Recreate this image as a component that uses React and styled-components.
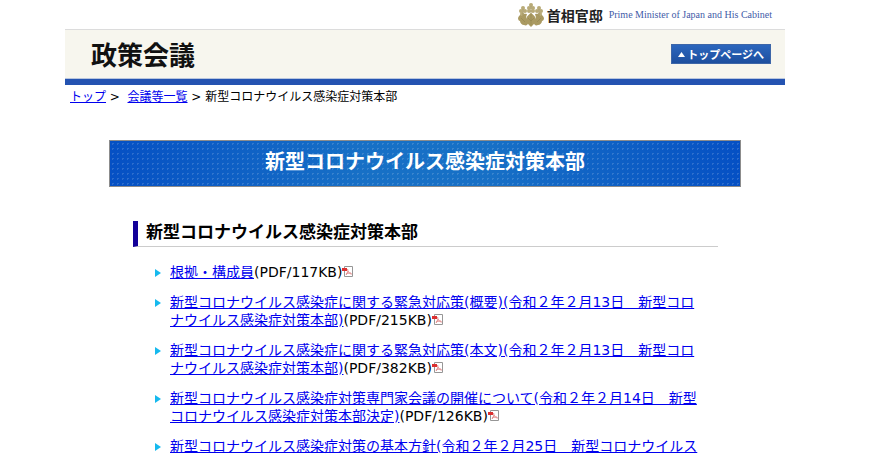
import React from 'react';
import styled, { createGlobalStyle } from 'styled-components';

const GlobalStyle = createGlobalStyle`
  body {
    margin: 0;
    background: #fff;
    color: #000;
    font-family: 'DejaVu Sans', 'Noto Sans CJK JP', sans-serif;
  }

  a {
    color: #0000ee;
  }
`;

const StyledPage = styled.div`
  padding-right: 21px;
`;

const StyledWrapper = styled.div`
  max-width: 720px;
  margin: 0 auto;
`;

const StyledTopBar = styled.div`
  display: flex;
  align-items: center;
  justify-content: flex-end;
  height: 29px;
  padding-right: 13px;
  border-bottom: 1px solid #dcdcdc;
`;

const StyledCrest = styled.svg`
  width: 26px;
  height: 24px;
  margin-right: 3px;
`;

const StyledOffice = styled.span`
  margin-right: 6px;
  color: #222;
  font-family: 'Noto Sans CJK JP', sans-serif;
  font-size: 14px;
  font-weight: 700;
  line-height: 20px;
`;

const StyledOfficeEnglish = styled.span`
  color: #3f5ca8;
  font-family: 'Liberation Serif', serif;
  font-size: 10px;
  line-height: 20px;
`;

const StyledHeader = styled.header`
  display: flex;
  align-items: center;
  justify-content: space-between;
  height: 48px;
  padding: 0 14px 0 26px;
  background: #f7f6ee;
  border-bottom: 1px solid #b9c6de;
`;

const StyledSection = styled.p`
  margin: 0;
  color: #111;
  font-family: 'Noto Sans CJK JP', serif;
  font-size: 26px;
  font-weight: 700;
  line-height: 40px;
`;

const StyledTopLink = styled.a`
  display: flex;
  align-items: center;
  justify-content: space-between;
  box-sizing: border-box;
  width: 100px;
  height: 20px;
  padding: 0 6px;
  border: 1px solid #3d66a8;
  background: linear-gradient(#2c66bd, #1d4f9f);
  color: #fff;
  font-family: 'Noto Sans CJK JP', sans-serif;
  font-size: 11px;
  font-weight: 700;
  line-height: 18px;
  text-decoration: none;
`;

const StyledBlueLine = styled.div`
  height: 6px;
  background: #2453b1;
`;

const StyledBreadcrumbs = styled.nav`
  padding: 3px 5px;
  font-size: 12px;
  line-height: 18px;
  white-space: pre-wrap;
`;

const StyledTitle = styled.h1`
  margin: 31px 44px 0;
  padding-bottom: 2px;
  border: 1px solid #8c8c8c;
  background:
    radial-gradient(circle, rgba(255, 255, 255, 0.15) 1px, transparent 1px) 0 0 / 5px 5px,
    linear-gradient(to right, #0550c4, #1770c6 40%, #1770c6 60%, #0550c4);
  color: #fff;
  font-size: 20px;
  line-height: 43px;
  text-align: center;
`;

const StyledMain = styled.main`
  margin: 34px 67px 0 68px;
`;

const StyledHeading = styled.h2`
  margin: 0;
  padding: 0 0 2px 8px;
  border-left: 5px solid #130099;
  border-bottom: 1px solid #ccc;
  font-size: 17px;
  line-height: 23px;
`;

const StyledList = styled.ul`
  display: flex;
  flex-direction: column;
  gap: 12px;
  margin: 16px 0 0;
  padding: 0 12px 0 22px;
  list-style: none;
`;

const StyledItem = styled.li`
  display: flex;
  align-items: flex-start;
  font-size: 14px;
  line-height: 18px;
`;

const StyledMarker = styled.svg`
  flex: none;
  width: 6px;
  height: 8px;
  margin: 6px 9px 0 0;
`;

const StyledPdfIcon = styled.svg`
  width: 11px;
  height: 11px;
`;

const documents = [
  { title: '根拠・構成員', size: '117KB' },
  {
    title: '新型コロナウイルス感染症に関する緊急対応策(概要)(令和２年２月13日　新型コロナウイルス感染症対策本部)',
    size: '215KB',
  },
  {
    title: '新型コロナウイルス感染症に関する緊急対応策(本文)(令和２年２月13日　新型コロナウイルス感染症対策本部)',
    size: '382KB',
  },
  {
    title: '新型コロナウイルス感染症対策専門家会議の開催について(令和２年２月14日　新型コロナウイルス感染症対策本部決定)',
    size: '126KB',
  },
  {
    title: '新型コロナウイルス感染症対策の基本方針(令和２年２月25日　新型コロナウイルス感染症対策本部決定)',
  },
];

const Crest = () => (
  <StyledCrest viewBox="0 0 26 24" aria-hidden="true">
    <g fill="#aa9a62">
      <path d="M13 10c3 2 6 5 5 9-1 2-3 2-3 3l-2 2-2-2c0-1-2-1-3-3-1-4 2-7 5-9z" />
      <path d="M9 11c-4-1-8 0-9 4 0 2 1 3 2 3 0 2 2 4 4 4 2 1 4 0 4-2-3-3-2-6-1-9zM17 11c4-1 8 0 9 4 0 2-1 3-2 3 0 2-2 4-4 4-2 1-4 0-4-2 3-3 2-6 1-9z" />
    </g>
    <g fill="#b9ab78">
      <circle cx="13" cy="2" r="2" />
      <circle cx="11" cy="5" r="2" />
      <circle cx="15" cy="5" r="2" />
      <circle cx="11" cy="8" r="2" />
      <circle cx="15" cy="8" r="2" />
      <circle cx="5" cy="5" r="2" />
      <circle cx="3" cy="8" r="2" />
      <circle cx="7" cy="8" r="2" />
      <circle cx="4" cy="11" r="2" />
      <circle cx="21" cy="5" r="2" />
      <circle cx="19" cy="8" r="2" />
      <circle cx="23" cy="8" r="2" />
      <circle cx="22" cy="11" r="2" />
    </g>
    <path
      d="M13 3v19M5 6v7M21 6v7M10 15l3 3 3-3M3 15l4 4M23 15l-4 4"
      fill="none"
      stroke="#8f814c"
      strokeWidth="0.5"
    />
  </StyledCrest>
);

const PdfIcon = () => (
  <StyledPdfIcon viewBox="0 0 11 11" role="img" aria-label="PDF">
    <path d="M2.500.5h8v10h-8z" fill="#fff" stroke="#969696" />
    <path d="M0 2h5v3H0z" fill="#dc3030" />
    <path d="M5.500 3c1 1 0 4-1.500 6M6 5c1 2 2 3 4 3M4 8c2-1 4-1 5-1" fill="none" stroke="#e38a8a" />
  </StyledPdfIcon>
);

const App = () => (
  <StyledPage>
    <GlobalStyle />
    <StyledWrapper>
      <StyledTopBar>
        <Crest />
        <StyledOffice>首相官邸</StyledOffice>
        <StyledOfficeEnglish>Prime Minister of Japan and His Cabinet</StyledOfficeEnglish>
      </StyledTopBar>
      <StyledHeader>
        <StyledSection>政策会議</StyledSection>
        <StyledTopLink href="#top">
          <svg width="7" height="5" viewBox="0 0 7 5" aria-hidden="true">
            <path d="M3.500 0L7 5H0z" fill="#fff" />
          </svg>
          トップページへ
        </StyledTopLink>
      </StyledHeader>
      <StyledBlueLine />
      <StyledBreadcrumbs>
        <a href="#top">トップ</a>
        {' >  '}
        <a href="#list">会議等一覧</a>
        {' > 新型コロナウイルス感染症対策本部'}
      </StyledBreadcrumbs>
      <StyledTitle>新型コロナウイルス感染症対策本部</StyledTitle>
      <StyledMain>
        <StyledHeading>新型コロナウイルス感染症対策本部</StyledHeading>
        <StyledList>
          {documents.map(({ title, size }) => (
            <StyledItem key={title}>
              <StyledMarker viewBox="0 0 6 8" aria-hidden="true">
                <path d="M0 0l6 4-6 4z" fill="#16b9ee" />
              </StyledMarker>
              <div>
                <a href="#pdf">{title}</a>
                {size && (
                  <>
                    (PDF/{size})<PdfIcon />
                  </>
                )}
              </div>
            </StyledItem>
          ))}
        </StyledList>
      </StyledMain>
    </StyledWrapper>
  </StyledPage>
);

export default App;
